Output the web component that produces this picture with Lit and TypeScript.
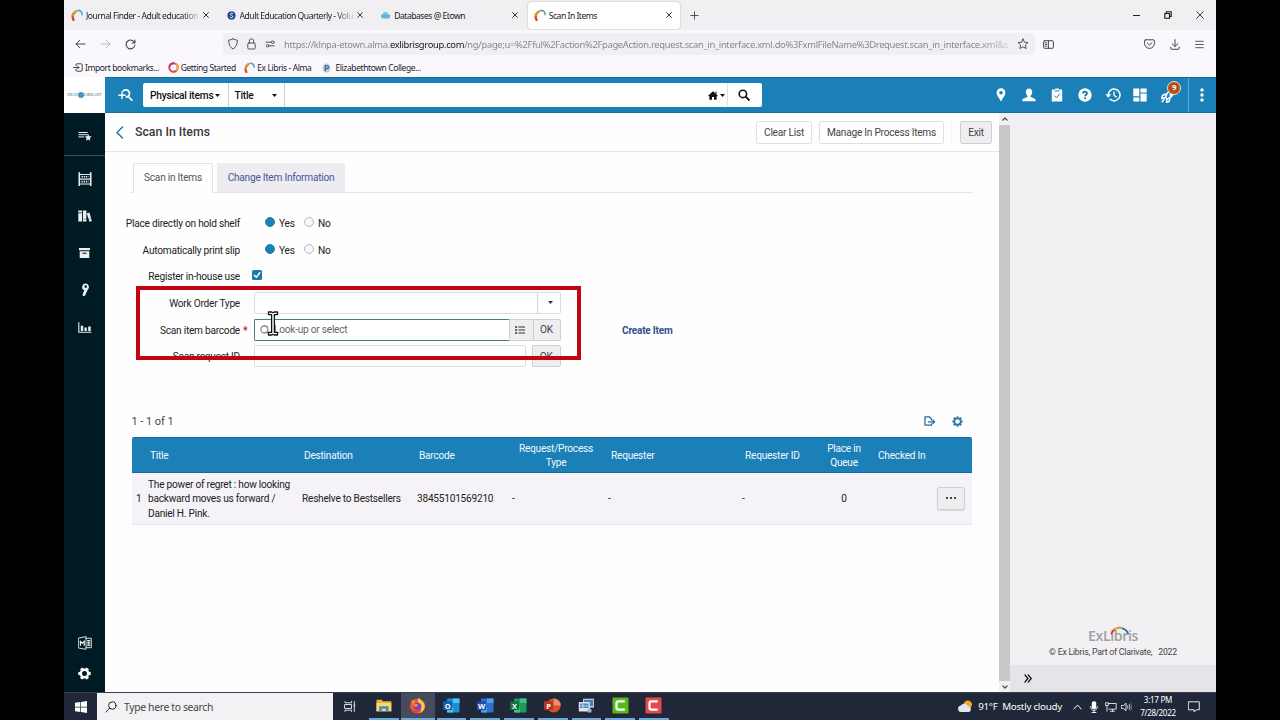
import { LitElement, html, css, svg } from "lit";
import { customElement } from "lit/decorators.js";

const draw = (w: number, h: number, body: unknown, vb = `0 0 ${w} ${h}`) =>
  html`<svg width=${w} height=${h} viewBox=${vb} fill="none" stroke-linecap="round" stroke-linejoin="round">${body}</svg>`;

const arc = (s: number) => draw(s, s, svg`
  <path d="M2.600 11C1 8 1.600 5 4.200 2.900" stroke="#d8402a" stroke-width="2.300"/>
  <path d="M1.800 6.600C2.300 4.800 3.300 3.400 4.600 2.600" stroke="#f0922c" stroke-width="2"/>
  <path d="M4.200 2.800C5.400 1.800 7 1.300 8.200 1.500" stroke="#8bbf4a" stroke-width="1.700"/>
  <path d="M8 1.500c2 .3 3 1.800 3.200 4.200" stroke="#3a9ac8" stroke-width="1.400"/>`, "0 0 12 12");

const close = (c = "#222") => draw(6, 6, svg`<path d="M.6.6l4.800 4.800M5.400.6L.6 5.400" stroke=${c} stroke-width=".9"/>`);

const globe = draw(11, 11, svg`<circle cx="5.500" cy="5.500" r="5" fill="#cfdcf2"/><circle cx="5.500" cy="5.500" r="3.900" fill="#173a8c"/>
  <path d="M7 3.700C6 2.900 4.200 3.200 4.300 4.400c.1 1.200 2.600.9 2.600 2.200C6.900 7.800 5 8.100 4 7.200" stroke="#fff" stroke-width="1"/>`);
const cloud = draw(11, 8, svg`<path d="M2.800 7.500a2.300 2.300 0 0 1-.2-4.500A3 3 0 0 1 8.300 3a2.300 2.300 0 0 1 .1 4.500z" fill="#5fb6de"/><path d="M3 3.500C4 1.800 7 2 7.500 3.500" stroke="#a8dcf0"/>`);

const back = draw(11, 10, svg`<path d="M10 5H1M4.800 1.200L1 5l3.800 3.800" stroke="#444" stroke-width="1"/>`);
const forward = draw(11, 10, svg`<path d="M1 5h9M6.200 1.200L10 5 6.200 8.800" stroke="#b9b7bd" stroke-width="1"/>`);
const reload = draw(11, 11, svg`<path d="M9.600 3.800A4.400 4.400 0 1 0 9.900 6M9.900 1v3H7" stroke="#444" stroke-width="1.100"/>`);
const shield = draw(10, 12, svg`<path d="M5 .8C6.300 1.700 7.800 2 9.300 2.100 9.300 6.500 8 9.300 5 11 2 9.300.7 6.500.7 2.100 2.200 2 3.700 1.700 5 .8z" stroke="#555" stroke-width="1"/>`);
const lock = draw(9, 12, svg`<rect x=".8" y="5" width="7.400" height="6" rx="1" stroke="#555"/><path d="M2.300 5V3a2.200 2.200 0 0 1 4.400 0v2" stroke="#555"/>`);
const perms = draw(10, 8, svg`<path d="M1 2.200h5M4.500 5.800h4.500" stroke="#555"/><circle cx="7.700" cy="2.200" r="1.300" stroke="#555"/><circle cx="2.600" cy="5.800" r="1.300" stroke="#555"/>`);
const star = draw(12, 12, svg`<path d="M6 1l1.500 3.200 3.500.4-2.600 2.400.7 3.500L6 8.800 2.900 10.500l.7-3.500L1 4.600l3.500-.4z" stroke="#444" stroke-width=".9"/>`);
const reader = draw(11, 9, svg`<rect x=".6" y=".7" width="9.800" height="7.600" rx="1" stroke="#444"/><path d="M5.500 1v7M2.200 2.800h1.800M2.200 4.500h1.800M2.200 6.200h1.800" stroke="#444" stroke-width=".9"/>`);
const pocket = draw(11, 10, svg`<path d="M1.600.8h7.800q1 0 1 1v2.700a4.900 4.900 0 0 1-9.800 0V1.800q0-1 1-1zM3.200 3.900l2.300 2.200 2.300-2.200" stroke="#444"/>`);
const download = draw(10, 11, svg`<path d="M5 .6v6.800M2.200 4.800L5 7.500l2.800-2.700M.8 8v1.300q0 1 1 1h6.400q1 0 1-1V8" stroke="#444"/>`);
const burger = draw(9, 9, svg`<path d="M.7 1.300h7.600M.7 4.500h7.600M.7 7.700h7.600" stroke="#444" stroke-width=".9"/>`);
const importIc = draw(10, 9, svg`<path d="M3 2.500V1.600Q3 .8 3.800.8h4.400q1 0 1 .8v5.800q0 .8-1 .8H3.800Q3 8.200 3 7.400V6.500M.6 4.500h5.200M4.300 2.900l1.600 1.600-1.600 1.600" stroke="#333" stroke-width=".9"/>`);
const foxMini = draw(11, 11, svg`<circle cx="5.500" cy="5.500" r="4.200" stroke="#e0453a" stroke-width="2"/><path d="M1.500 4A4.200 4.200 0 0 1 6 1.400" stroke="#a03ab0" stroke-width="1.700"/><path d="M8 2a4.200 4.200 0 0 1 1 6" stroke="#f5a63c" stroke-width="2"/>`);
const college = draw(9, 10, svg`<ellipse cx="4.500" cy="5" rx="4" ry="4.600" fill="#b9cbd9"/><path d="M3.300 2.500v5.200M3.300 2.800C7.500 2 7.500 6 4 5.700" stroke="#35607e" stroke-width="1.100"/>`);

const caret = (c = "#111") => draw(5, 3, svg`<path d="M0 0h5L2.500 3z" fill=${c}/>`);
const plusSearch = draw(15, 14, svg`<path d="M.8 7.200h6.500M4 4v6.500" stroke="#fff" stroke-width="1.400"/><path d="M5.200 2.900a3.700 3.700 0 1 1 3.200 6.300M10.600 8.700l3.300 3.600" stroke="#fff" stroke-width="1.700"/>`);
const home = draw(10, 9, svg`<path d="M5 .3L9.900 4.700 9.300 5.300H8.600V8.700H6V6H4v2.700H1.400V5.300H.7L.1 4.700z" fill="#111"/><path d="M7.300.8h1.200v2.500L7.300 2.200z" fill="#111"/>`);
const mag = draw(12, 12, svg`<circle cx="4.900" cy="4.900" r="3.700" stroke="#111" stroke-width="1.600"/><path d="M7.900 7.900l3 3" stroke="#111" stroke-width="2"/>`);

const topIcons = [
  draw(10, 14, svg`<path fill-rule="evenodd" d="M5 .3a4.400 4.400 0 0 1 4.400 4.500C9.400 7.800 6.500 10.200 5 13.700 3.500 10.200.6 7.800.6 4.800A4.400 4.400 0 0 1 5 .3zM5 2.900a1.800 1.800 0 1 0 0 3.600 1.800 1.800 0 0 0 0-3.600z" fill="#fff"/>`),
  draw(14, 14, svg`<path d="M7 .4c2 0 3.200 1.300 3.200 3.300 0 1.800-.7 3.300-1.600 4v1.200c1.800.9 5 1.200 5.100 3.400v1H.3v-1c.1-2.200 3.300-2.500 5.100-3.400V7.700c-.9-.7-1.600-2.200-1.600-4C3.800 1.700 5 .4 7 .4z" fill="#fff"/>`),
  draw(12, 14, svg`<path d="M.8 1.500h3L4.500.4h3l.7 1.100h3v12H.8z" fill="#fff"/><path d="M3.500 7.800l1.900 2 3.300-3.800M4 2.900h4" stroke="#1b80b8" stroke-width="1"/>`),
  draw(14, 14, svg`<circle cx="7" cy="7" r="6.700" fill="#fff"/><path d="M5 5.400C5.100 3.100 9.100 3.100 9 5.400 9 6.800 7.100 6.800 7.100 8.300" stroke="#1b70a8" stroke-width="1.700" stroke-linecap="butt"/><circle cx="7.100" cy="10.300" r="1" fill="#1b70a8"/>`),
  draw(16, 14, svg`<path d="M3.200 7a5.900 5.900 0 1 1 1.900 4.300" stroke="#fff" stroke-width="1.500"/><path d="M.3 6.300h6L3.200 9.700z" fill="#fff"/><path d="M9 3.800v3.700l2.400 1.400" stroke="#fff" stroke-width="1.300"/>`),
  draw(14, 14, svg`<path d="M.3.4h6v7.800h-6zM7.500.4h6.200v4H7.500zM.3 9.400h6v4.200h-6zM7.500 5.600h6.200v8H7.500z" fill="#fff"/>`),
  draw(15, 15, svg`<path d="M4.500 9.500C5.500 5 8.500 1.500 13.500 1 13.500 6 10.500 9.500 6 11zM4.800 6L1.500 7.500.8 10.500l3-.8M9 10l-1 3.500-2.600.8.5-3M2.800 11.700l-1.600 2" stroke="#fff" stroke-width="1.500"/><path d="M9 2.500l3.500.5-1 4-3 2z" fill="#fff"/>`),
];
const kebab = draw(4, 14, svg`<circle cx="2" cy="2" r="1.700" fill="#fff"/><circle cx="2" cy="7" r="1.700" fill="#fff"/><circle cx="2" cy="12" r="1.700" fill="#fff"/>`);

const W = "#e9eff1";
const sideList = draw(14, 11, svg`<path d="M.8 1.500h8.500M.8 3.700h8.500M.8 5.900h5" stroke=${W} stroke-width="1"/><path d="M10.200 3l1 2.300 2.500.2-1.900 1.700.6 2.500-2.200-1.300L8 9.700l.6-2.500-1.900-1.700 2.500-.2z" fill=${W}/>`);
const sideShelf = draw(14, 14, svg`<path d="M1.300.8v12.700M12.700.8v12.700" stroke=${W} stroke-width="1.600"/><path d="M1.500 2.500h11M1.500 7.200h11M1.500 12h11" stroke=${W} stroke-width="1.200"/><path d="M3.500 4.800h7M3.500 9.600h7" stroke=${W} stroke-width="1.600" stroke-dasharray="1.400 .8" stroke-linecap="butt"/>`);
const sideBooks = draw(14, 12, svg`<path d="M.3 3.300H4v8.300H.3zM.3.600H4v1.900H.3zM4.900.5h3.500v11.100H4.900zM8.800 3.200l2.600-.7 2.500 8.500-2.600.7z" fill=${W}/><path d="M5.200 9h8" stroke="#001b24" stroke-width=".4"/>`);
const sideBox = draw(11, 10, svg`<path d="M0 0h11v2.300H0zM.7 3.200h9.600V10H.7z" fill=${W}/><path d="M3.800 5.200h3.400" stroke="#001b24" stroke-width="1.100"/>`);
const sideKey = draw(10, 14, svg`<path fill-rule="evenodd" d="M5.500.6a3.500 3.500 0 0 1 2.200 6.200L5 12.800l-2 .5-.6-1.500.8-1-.3-1.200 1-.8.3-1.500A3.500 3.500 0 0 1 5.500.6zM5.700 2.300a1.300 1.300 0 1 0 0 2.600 1.300 1.300 0 0 0 0-2.600z" fill=${W}/>`);
const sideChart = draw(14, 11, svg`<path d="M.8.3v10h12.700" stroke=${W} stroke-width="1.100" stroke-linecap="butt"/><path d="M2.800 3.800h2.400v5.300H2.800zM6.500 5.500h2.300v3.600H6.500zM10.200 4.500h2.500v4.600h-2.500z" fill=${W}/>`);
const sideM = draw(14, 14, svg`<path d="M.7 2L8 .7v12.600L.7 12zM8 2.300h5.300v9.400H8M9.500 4.500h2.500M9.500 6.200h2.500M9.500 7.900h2.500M9.500 9.600h2.500M10.800 4.500v5" stroke=${W} stroke-width=".9"/><path d="M2.400 9.300V5l1.900 2.500L6.200 5v4.300" stroke=${W} stroke-width="1.200"/>`);
const gearSide = draw(13, 13, svg`<circle cx="6.500" cy="6.500" r="3.700" stroke="#fff" stroke-width="2.400"/><circle cx="6.500" cy="6.500" r="5.300" stroke="#fff" stroke-width="1.900" pathLength="60" stroke-dasharray="5.500 4.500" stroke-dashoffset="2.700" stroke-linecap="butt"/>`);
const gearTable = draw(11, 11, svg`<circle cx="5.500" cy="5.500" r="3.300" stroke="#2f74a5" stroke-width="1.900"/><circle cx="5.500" cy="5.500" r="4.500" stroke="#2f74a5" stroke-width="1.400" pathLength="80" stroke-dasharray="5.500 4.500" stroke-dashoffset="2.700" stroke-linecap="butt"/>`);

const chevron = draw(8, 13, svg`<path d="M6.500 1L1 6.500 6.500 12" stroke="#1f7da3" stroke-width="1.500"/>`);
const check = draw(10, 10, svg`<rect width="10" height="10" rx="1.500" fill="#1a7aa8"/><path d="M2.300 5.200l2 2 3.500-4.400" stroke="#fff" stroke-width="1.400"/>`);
const lens = draw(10, 10, svg`<circle cx="4.400" cy="4.400" r="3.500" stroke="#777" stroke-width="1.100"/><path d="M7 7.200L9 9.200" stroke="#777" stroke-width="1.100"/>`);
const listIc = draw(10, 8, svg`<path d="M.6 1h1M.6 4h1M.6 7h1" stroke="#222" stroke-width="1.300"/><path d="M3.800 1h5.800M3.800 4h5.800M3.800 7h5.800" stroke="#333" stroke-width="1.100"/>`);
const exportIc = draw(12, 10, svg`<path d="M7.500 3.700V3L5.300.8H1v8.400h6.500V8M4.500 5.900h6M8.900 4.200l1.800 1.700-1.800 1.700" stroke="#2c6692" stroke-width="1.300"/>`);
const beam = draw(14, 27, svg`<path d="M2.500 2h3.300L7 2.700 8.200 2h3.300v2.600H8.400v17.800h3.100V25H8.200L7 24.300 5.800 25H2.500v-2.600h3.100V4.600H2.500z" fill="#fff" stroke="#111" stroke-width="1.300"/>`);
const exArc = draw(20, 9, svg`<path d="M1.500 7.500C2.200 5.600 3.400 4.200 5 3.200" stroke="#d8402a" stroke-width="2"/><path d="M4.800 3.200C6 2.300 7.500 1.800 9 1.700" stroke="#f0a02c" stroke-width="1.900"/><path d="M8.800 1.700c1.600-.1 3 .2 4.200.8" stroke="#7dbb58" stroke-width="1.800"/><path d="M12.900 2.500c2.800 1 4.300 2.800 5.200 5" stroke="#2668b0" stroke-width="1.700"/>`);
const dblChev = draw(8, 9, svg`<path d="M.9.9l3 3.600-3 3.600M4.200.9l3 3.600-3 3.600" stroke="#111" stroke-width="1.300"/>`);
const scrollArrow = (up: boolean) => draw(6, 4, up ? svg`<path d="M.8 3.200L3 1l2.200 2.200" stroke="#444" stroke-width="1.200"/>` : svg`<path d="M.8.8L3 3 5.200.8" stroke="#444" stroke-width="1.200"/>`);

const winLogo = draw(12, 12, svg`<path d="M0 1.800l5.300-.8v4.700H0zM6 .9l6-.9v5.700H6zM0 6.400h5.300V11L0 10.200zM6 6.400h6V12l-6-.9z" fill="#fff"/>`);
const taskLens = draw(12, 12, svg`<circle cx="7.300" cy="4.500" r="3.700" stroke="#222" stroke-width="1"/><path d="M4.600 7.200L.8 11" stroke="#222" stroke-width="1"/>`);
const taskView = draw(12, 11, svg`<path d="M1 .5v1.300h6.500V.5M1 10.500V9.200h6.500v1.300M1 3.500h6.500v4H1zM10.300.5v10" stroke="#d6dbe4" stroke-width="1"/><path d="M9.600 3.500h1.600v1.800H9.600z" fill="#d6dbe4"/>`);
const folder = draw(16, 13, svg`<path d="M.5.8h5.200l1.300 1.500h8.300v10H.5z" fill="#e8b33c"/><path d="M.5 4h14.800v8.300H.5z" fill="#fbd66b"/><path d="M3.200 12.600V7.300h9.300v5.300h-2.600V9.700H5.800v2.900z" fill="#3f8fbe"/>`);
const firefox = draw(17, 17, svg`<circle cx="8.500" cy="9" r="7.600" fill="#f0562f"/><path d="M10 .4c.2 2 3.500 3 5.200 6 1.800 4-.7 8-4.500 9.600 3-4 1.500-7.500-1-9C8.800 5 8.500 2.500 10 .4z" fill="#ffc83a"/><path d="M2.500 3c1.500-.3 3 .5 3.800 1.800L4 9z" fill="#f98a2b"/><circle cx="8.700" cy="9.300" r="3.600" fill="#7a3fc4"/><path d="M5 8.500C6 6.800 8 7.300 9.500 8 8 8.500 8 9.500 6.500 9.700z" fill="#ffa436"/><path d="M1.500 11c2 4 7.500 4.500 10 1.500-1 3.500-8 5-10-1.500z" fill="#e5285a"/>`);
const office = (l: string, dark: string, a: string, b: string) => draw(17, 15, svg`
  <rect x="4" y=".5" width="12.500" height="14" rx="1" fill=${a}/><path d="M10 .5h6.500V5H10zM4 9.500h6v5H4z" fill=${b}/>
  <rect x="0" y="3.300" width="9" height="8.800" rx=".8" fill=${dark}/><text x="4.500" y="10.500" text-anchor="middle" font-family="Open Sans, sans-serif" font-weight="700" font-size="7.500" fill="#fff">${l}</text>`);
const ppt = draw(17, 15, svg`<circle cx="9.700" cy="7.500" r="7" fill="#d35230"/><path d="M9.700.5a7 7 0 0 1 7 7h-7z" fill="#f08a6c"/><rect x="0" y="3.300" width="9" height="8.800" rx=".8" fill="#b7351c"/><text x="4.500" y="10.500" text-anchor="middle" font-family="Open Sans, sans-serif" font-weight="700" font-size="7.500" fill="#fff">P</text>`);
const remote = draw(17, 15, svg`<rect x="5" y=".7" width="11" height="9" fill="#b9c7d8"/><rect x="6" y="2" width="9" height="6" fill="#4580b4"/><rect x=".8" y="4" width="11" height="9.500" fill="#dbe4ee"/><path d="M2 5.500h8.500v4.500H2z" fill="#4f88ba"/><path d="M2.500 8h7M5 6v3.500" stroke="#dbe4ee" stroke-width=".8"/><path d="M9.500 11h4v3.500h-4z" fill="#9bb2c9"/>`);
const camtasia = (c: string) => draw(17, 17, svg`<rect x=".5" y=".5" width="16" height="16" rx="1" fill=${c}/><path d="M12.800 4.400H6.300Q4.500 4.400 4.500 6.200v4.600q0 1.800 1.800 1.800h6.500" stroke="#fff" stroke-width="2.300" stroke-linecap="butt"/>`);
const weather = draw(16, 13, svg`<circle cx="10.800" cy="4.600" r="4.200" fill="#f5a82c"/><path d="M4 12a3.300 3.300 0 0 1-.3-6.500A4.200 4.200 0 0 1 11 6.200 3 3 0 0 1 12 12z" fill="#dfe8f2"/>`);
const up = draw(9, 6, svg`<path d="M.8 5L4.500 1l3.700 4" stroke="#fff" stroke-width="1"/>`);
const mic = draw(8, 12, svg`<rect x="1.800" y=".3" width="4.400" height="8" rx="2" fill="#fff"/><path d="M.6 5.500C.6 11 7.400 11 7.400 5.500M4 9.500v2M2 11.500h4" stroke="#fff" stroke-width=".9"/>`);
const net = draw(12, 10, svg`<path d="M3.500 1.500h7.700v5.700H4M7.500 7.500v1.800M5.500 9.300h4M.8.8h2.500v2.700H.8zM2 3.500v5.700" stroke="#e8ecf2" stroke-width=".9"/>`);
const vol = draw(12, 10, svg`<path d="M.7 3.500h1.800L5 1.200v7.600L2.500 6.500H.7z" stroke="#e8ecf2" stroke-width=".9"/><path d="M6.700 3.700q.8 1.300 0 2.600M8.300 2.500q1.600 2.500 0 5" stroke="#e8ecf2" stroke-width=".8"/><path d="M9.900 1.500q2 3.500 0 7" stroke="#7d8796" stroke-width=".8"/>`);
const note = draw(12, 12, svg`<path d="M.7.8h10.600v8H8.200L6.200 11 6 8.800H.7z" stroke="#e8ecf2" stroke-width="1"/>`);

@customElement("app-root")
export class AppRoot extends LitElement {
  static styles = css`
    :host { display: block; width: 1280px; height: 720px; overflow: hidden; background: #000; font-family: Roboto, sans-serif; color: #222; font-size: 10.150px; letter-spacing: -.24px; }
    * { box-sizing: border-box; }
    svg { display: block; flex: none; }
    .screen { width: 1152px; height: 720px; margin: 0 64px; display: flex; flex-direction: column; position: relative; background: #fff; white-space: nowrap; }
    .row { display: flex; align-items: center; }
    .sys { font-family: "Noto Sans", sans-serif; }
    .tabs { height: 30px; background: #f0eff2; }
    .tab { width: 154.6px; height: 27px; padding: 0 10px 0 7px; font-size: 8.600px; letter-spacing: -.5px; color: #1b1b1f; gap: 3px; flex: none; }
    .tab .name { flex: 1; padding-top: 1px; }
    .fade { -webkit-mask-image: linear-gradient(90deg, #000 84%, rgba(0,0,0,.2) 98%); mask-image: linear-gradient(90deg, #000 84%, rgba(0,0,0,.2) 98%); }
    .tab.on { width: 152px; background: #fff; border-radius: 3px; box-shadow: 0 0 2px #aaa; padding: 0 8px 0 6px; }
    .plus { margin-left: 10px; }
    .wins { margin-left: auto; padding-right: 12px; gap: 24px; }
    .nav { height: 28px; background: #faf8fd; padding-left: 11px; }
    .nav .r { gap: 14px; }
    .nav .rd { margin-left: 8px; }
    .nav .end { margin-left: auto; padding-right: 12px; gap: 15px; }
    .url { width: 812px; height: 22px; background: #f1eff4; margin-left: 87px; padding: 0 7px 0 5px; gap: 9px; border-radius: 3px; flex: none; }
    .addr { flex: 1; font-size: 9.400px; color: #8a888e; letter-spacing: -.31px; -webkit-mask-image: linear-gradient(90deg, #000 96%, rgba(0,0,0,.3)); mask-image: linear-gradient(90deg, #000 96%, rgba(0,0,0,.3)); }
    .addr b { font-weight: 400; color: #15141a; }
    .marks { height: 19px; background: #faf8fd; padding-left: 9px; font-size: 8.500px; letter-spacing: -.4px; color: #1b1b1f; }
    .mark { gap: 2px; margin-right: 8.500px; }
    .mark.lib { margin-right: 11px; }
    .mark.col { gap: 4px; }
    .bar { height: 36px; background: #1b80b8; border-top: 1px solid #17699a; border-bottom: 1px solid #17709f; }
    .logo { width: 41px; height: 36px; margin-top: -1px; background: #fff; justify-content: center; font: 4.500px "Liberation Serif", serif; color: #5c7886; letter-spacing: -.2px; }
    .dot { width: 6px; height: 6px; border-radius: 50%; background: #4497c4; }
    .plusq { margin-left: 13px; }
    .find { width: 619px; height: 24px; margin-left: 10px; background: #fff; border-radius: 2px; font-size: 10.200px; font-weight: 500; color: #111; }
    .find > div { height: 24px; }
    .f1 { width: 84.500px; padding-left: 7px; gap: 2px; letter-spacing: -.22px; }
    .f2 { width: 57px; border-left: 1px solid #ccd; border-right: 1px solid #ccd; padding: 0 7px 0 6px; justify-content: space-between; }
    .f3 { flex: 1; justify-content: flex-end; gap: 2px; padding-right: 2px; }
    .f4 { width: 35px; border-left: 1px solid #dde; justify-content: center; padding-right: 2px; }
    .icons { margin-left: auto; }
    .icons .i { width: 27.8px; display: flex; justify-content: center; position: relative; }
    .badge { position: absolute; left: 13px; top: -7px; width: 14px; height: 14px; border-radius: 50%; background: #b4501e; border: 1px solid #f3dfd3; color: #fff; font-size: 8px; font-weight: 700; line-height: 12px; text-align: center; letter-spacing: 0; }
    .more { width: 28px; height: 34px; border-left: 1px solid #64a9cf; margin-left: 6px; justify-content: center; padding-right: 1px; }
    .body { flex: 1; display: flex; min-height: 0; }
    .side { width: 41px; background: #001b24; display: flex; flex-direction: column; align-items: center; padding-bottom: 12px; }
    .side .s1 { height: 43px; width: 41px; padding-top: 4px; justify-content: center; border-bottom: 1px solid #38505a; }
    .side .s { height: 37.200px; justify-content: center; }
    .side .first { margin-top: 4px; }
    .side .push { margin-top: auto; margin-bottom: 17px; }
    .main { width: 894px; background: #fefefe; }
    .head { height: 39px; border-bottom: 1px solid #e6e4e8; padding: 0 7px 0 11px; }
    .h1 { font-size: 12.300px; letter-spacing: 0; font-weight: 500; margin-left: 11px; color: #3a3a3a; margin-right: auto; }
    .btn { height: 23px; border: 1px solid #dfdee2; border-radius: 2.500px; justify-content: center; color: #444; background: #fff; }
    .gray { background: #eeedf0; border-color: #cfced3; }
    .w1 { width: 56px; } .w2 { width: 125px; margin: 0 7px; } .w3 { width: 32px; margin-left: 8px; }
    .vr { width: 1px; height: 23px; background: #f2f1f4; }
    .pages { margin: 11px 26px 0 26px; height: 30px; display: flex; border-bottom: 1px solid #e6e5e9; padding-left: 2px; }
    .page { height: 30px; justify-content: center; color: #555; }
    .p1 { width: 80px; border: 1px solid #e2e1e5; border-bottom: 0; background: #fefefe; border-radius: 2px 2px 0 0; padding-bottom: 2px; }
    .p2 { width: 128px; height: 29px; margin-left: 4px; background: #eeecf0; color: #3f57a0; }
    .form { padding: 16.500px 0 0; }
    .line { height: 26.700px; }
    .label { width: 135px; text-align: right; color: #222; position: relative; padding-top: 1px; }
    .req { position: absolute; left: 138px; color: #d0101c; font-weight: 700; }
    .opts { margin-left: 25px; }
    .opts .t { padding-top: 1px; }
    .radio { width: 10px; height: 10px; border-radius: 50%; border: 1px solid #bbb8c4; background: #f7f6fa; margin-right: 4.500px; margin-top: -1px; }
    .radio.on { background: #1b80b8; border-color: #1b80b8; }
    .opts .yes { width: 24.500px; } .opts .on { margin-right: 4px; }
    .cb { margin-left: 12px; margin-top: -2px; }
    .box { height: 22px; margin-left: 14px; border: 1px solid #dbdadf; border-radius: 2px; background: #fff; }
    .b1 { width: 306.500px; justify-content: flex-end; }
    .drop { width: 23px; height: 20px; border-left: 1px solid #d6d5da; justify-content: center; padding-left: 3px; }
    .b2 { width: 256px; border: 1.500px solid #47807f; border-radius: 1px; padding-left: 5px; gap: 4px; color: #666; margin-right: -1px; }
    .b3 { width: 272px; margin-right: 6px; }
    .lst { width: 24.500px; height: 22px; border-radius: 0; padding-right: 2px; } .ok { width: 28px; height: 22px; margin-left: -1px; border-radius: 0 2px 2px 0; }
    .ok2 { width: 28.500px; height: 22px; border-radius: 2px; }
    .create { margin-left: 61.500px; font-weight: 700; color: #34508f; padding-top: 1px; }
    .sum { margin: 42.500px 36px 0 26.500px; height: 18px; font-size: 10.900px; letter-spacing: 0; color: #444; }
    .sum .sp { margin-left: auto; margin-right: 16px; }
    .sum .sq { width: 16px; }
    .table { margin: 7px 0 0 27px; width: 840px; }
    .tr { display: grid; grid-template-columns: 12px 154px 115px 95px 96px 134px 82px 48px 62px 42px; align-items: center; }
    .th { height: 36px; background: #1b80b8; border-top: 1px solid #176c9c; border-bottom: 1px solid #176c9c; border-radius: 2px 2px 0 0; color: #f2f8fb; line-height: 14.300px; }
    .th > div { padding: 2px 0 0 6px; } .th > .ctr { padding: 2px 0 0; } .ctr { text-align: center; } .th > .pl { padding-left: 7px; } .th > .pc { padding-left: 10px; }
    .td { height: 52px; background: #f5f3f8; border-bottom: 1px solid #e6e4e9; line-height: 14.300px; color: #222; }
    .td > div { padding: 2px 0 0 4px; } .td > .ctr { padding: 2px 0 0; }
    .td > .dots { width: 28px; height: 23px; margin-left: 7px; margin-bottom: 1px; padding: 0; gap: 1.300px; box-shadow: 0 1px 1px #ddd; }
    .dots i { width: 2.600px; height: 2.600px; border-radius: 50%; background: #111; }
    .scroll { width: 11px; background: #f1f0f2; display: flex; flex-direction: column; align-items: center; padding: 4px 0 3px; }
    .thumb { flex: 1; width: 11px; background: #c9c8cb; margin: 4px 0; }
    .panel { flex: 1; background: #f2f0f3; display: flex; flex-direction: column; align-items: center; justify-content: flex-end; }
    .ex { font: 600 14.200px "Open Sans", sans-serif; letter-spacing: -.4px; color: #a09fa3; line-height: 16px; position: relative; }
    .ex svg { position: absolute; left: 22px; top: -2px; }
    .copy { font-size: 8.700px; letter-spacing: -.2px; color: #444; margin: 3px 0 7px; line-height: 11px; }
    .foot { height: 27px; width: 100%; background: #e6e4e8; padding-left: 14px; }
    .taskbar { height: 28px; background: #1f2739; border-top: 1px solid #3a4050; color: #fff; }
    .start { width: 33px; height: 28px; justify-content: center; }
    .type { width: 236px; height: 28px; background: #f2f1f4; color: #444; padding-left: 8px; gap: 7px; font-size: 10.400px; letter-spacing: -.35px; }
    .app { width: 33.750px; height: 27px; justify-content: center; flex: none; }
    .app.tv { width: 34px; }
    .app.act { background: #464c5c; border-bottom: 2px solid #6fa8d6; }
    .app.gap { border-image: linear-gradient(90deg, transparent 9%, #6fa8d6 9%, #6fa8d6 91%, transparent 91%) 1; border-style: solid; border-width: 0 0 2px; }
    .tray { margin-left: auto; font-size: 9.800px; }
    .t1 { margin: 0 11px 0 5px; letter-spacing: -.27px; }
    .g8 { width: 8px; } .g7 { width: 7px; } .g4 { width: 4px; } .g16 { width: 16px; }
    .clock { font-size: 8.100px; line-height: 12.500px; width: 36px; margin: 0 12px 0 7px; letter-spacing: -.3px; display: flex; flex-direction: column; align-items: center; }
    .red { position: absolute; left: 72px; top: 286px; width: 445px; height: 74px; border: 4px solid #c10512; }
    .cursor { position: absolute; left: 202px; top: 310px; }
  `;

  render() {
    return html`<div class="screen">
      <div class="row tabs sys">
        <div class="row tab">${arc(12)}<div class="name fade">Journal Finder - Adult education</div>${close()}</div>
        <div class="row tab">${globe}<div class="name fade">Adult Education Quarterly - Volu</div>${close()}</div>
        <div class="row tab">${cloud}<div class="name">Databases @ Etown</div>${close()}</div>
        <div class="row tab on">${arc(12)}<div class="name">Scan In Items</div>${close()}</div>
        <div class="plus">${draw(9, 9, svg`<path d="M4.500.8v7.400M.8 4.500h7.400" stroke="#444" stroke-width=".9"/>`)}</div>
        <div class="row wins">
          ${draw(7, 7, svg`<path d="M.3 3.500h6.500" stroke="#222"/>`)}
          ${draw(8, 8, svg`<path d="M.8 2.500h4.700v4.700H.8zM2.300 2.300V.8h4.900v4.700H5.700" stroke="#111" stroke-width="1.100"/>`)}
          ${draw(8, 8, svg`<path d="M.8.8l6.400 6.400M7.200.8L.8 7.200" stroke="#222" stroke-width=".9"/>`)}
        </div>
      </div>
      <div class="row nav sys">
        <div class="row r">${back}${forward}${reload}</div>
        <div class="row url">${shield}${lock}${perms}
          <div class="addr">https://klnpa-etown.alma.<b>exlibrisgroup.com</b>/ng/page;u=%2Fful%2Faction%2FpageAction.request.scan_in_interface.xml.do%3FxmlFileName%3Drequest.scan_in_interface.xml&amp;s</div>${star}</div>
        <div class="rd">${reader}</div>
        <div class="row end">${pocket}${download}${burger}</div>
      </div>
      <div class="row marks sys">
        <div class="row mark">${importIc}<span>Import bookmarks...</span></div>
        <div class="row mark">${foxMini}<span>Getting Started</span></div>
        <div class="row mark lib">${arc(11)}<span>Ex Libris - Alma</span></div>
        <div class="row mark col">${college}<span>Elizabethtown College...</span></div>
      </div>
      <div class="row bar">
        <div class="row logo">HIGH<span class="dot"></span>LIBRARY</div>
        <div class="plusq">${plusSearch}</div>
        <div class="row find">
          <div class="row f1">Physical items ${caret()}</div>
          <div class="row f2">Title ${caret()}</div>
          <div class="row f3">${home}${caret()}</div>
          <div class="row f4">${mag}</div>
        </div>
        <div class="row icons">${topIcons.map((t, n) => html`<div class="i">${t}${n === 6 ? html`<span class="badge">9</span>` : ""}</div>`)}</div>
        <div class="row more">${kebab}</div>
      </div>
      <div class="body">
        <div class="side">
          <div class="row s1">${sideList}</div>
          <div class="row s first">${sideShelf}</div>
          <div class="row s">${sideBooks}</div>
          <div class="row s">${sideBox}</div>
          <div class="row s">${sideKey}</div>
          <div class="row s">${sideChart}</div>
          <div class="push">${sideM}</div>
          ${gearSide}
        </div>
        <div class="main">
          <div class="row head">${chevron}<div class="h1">Scan In Items</div>
            <div class="row btn w1">Clear List</div><div class="row btn w2">Manage In Process Items</div><div class="vr"></div><div class="row btn gray w3">Exit</div>
          </div>
          <div class="pages"><div class="row page p1">Scan in Items</div><div class="row page p2">Change Item Information</div></div>
          <div class="form">
            ${["Place directly on hold shelf", "Automatically print slip"].map(l => html`
              <div class="row line"><div class="label">${l}</div>
                <div class="row opts"><span class="radio on"></span><span class="yes t">Yes</span><span class="radio"></span><span class="t">No</span></div></div>`)}
            <div class="row line"><div class="label">Register in-house use</div><div class="cb">${check}</div></div>
            <div class="row line"><div class="label">Work Order Type</div><div class="row box b1"><div class="row drop">${caret("#333")}</div></div></div>
            <div class="row line"><div class="label">Scan item barcode<span class="req">*</span></div>
              <div class="row box b2">${lens}Look-up or select</div><div class="row btn gray lst">${listIc}</div><div class="row btn gray ok">OK</div>
              <div class="create">Create Item</div></div>
            <div class="row line"><div class="label">Scan request ID</div><div class="box b3"></div><div class="row btn gray ok2">OK</div></div>
          </div>
          <div class="row sum">1 - 1 of 1<span class="sp"></span>${exportIc}<span class="sq"></span>${gearTable}</div>
          <div class="table">
            <div class="tr th"><div></div><div>Title</div><div>Destination</div><div>Barcode</div><div class="ctr">Request/Process<br>Type</div><div class="pl">Requester</div><div class="pl">Requester ID</div><div class="ctr">Place in<br>Queue</div><div class="pc">Checked In</div><div></div></div>
            <div class="tr td"><div>1</div><div>The power of regret : how looking<br>backward moves us forward /<br>Daniel H. Pink.</div><div>Reshelve to Bestsellers</div><div>38455101569210</div><div>-</div><div>-</div><div>-</div><div class="ctr">0</div><div></div><div class="row btn gray dots"><i></i><i></i><i></i></div></div>
          </div>
        </div>
        <div class="scroll">${scrollArrow(true)}<div class="thumb"></div>${scrollArrow(false)}</div>
        <div class="panel">
          <div class="ex">ExLibris${exArc}</div>
          <div class="copy">© Ex Libris, Part of Clarivate, &nbsp; 2022</div>
          <div class="row foot">${dblChev}</div>
        </div>
      </div>
      <div class="row taskbar sys">
        <div class="row start">${winLogo}</div>
        <div class="row type">${taskLens}Type here to search</div>
        <div class="row app tv">${taskView}</div>
        <div class="row app gap">${folder}</div>
        <div class="row app act">${firefox}</div>
        <div class="row app gap">${office("O", "#0f5fb0", "#1a8fd8", "#4fc3f2")}</div>
        <div class="row app gap">${office("W", "#1c4fa8", "#2f72cf", "#4aa0ea")}</div>
        <div class="row app gap">${office("X", "#12703f", "#1f9a5a", "#3cc484")}</div>
        <div class="row app gap">${ppt}</div>
        <div class="row app gap">${remote}</div>
        <div class="row app gap">${camtasia("#58b81c")}</div>
        <div class="row app gap">${camtasia("#e5484d")}</div>
        <div class="row tray">${weather}<span class="t1">91°F &nbsp;Mostly cloudy</span>${up}
          <span class="g8"></span>${mic}<span class="g7"></span>${net}<span class="g4"></span>${vol}
          <div class="clock"><span>3:17 PM</span><span>7/28/2022</span></div>${note}<span class="g16"></span></div>
      </div>
      <div class="red"></div>
      <div class="cursor">${beam}</div>
    </div>`;
  }
}
